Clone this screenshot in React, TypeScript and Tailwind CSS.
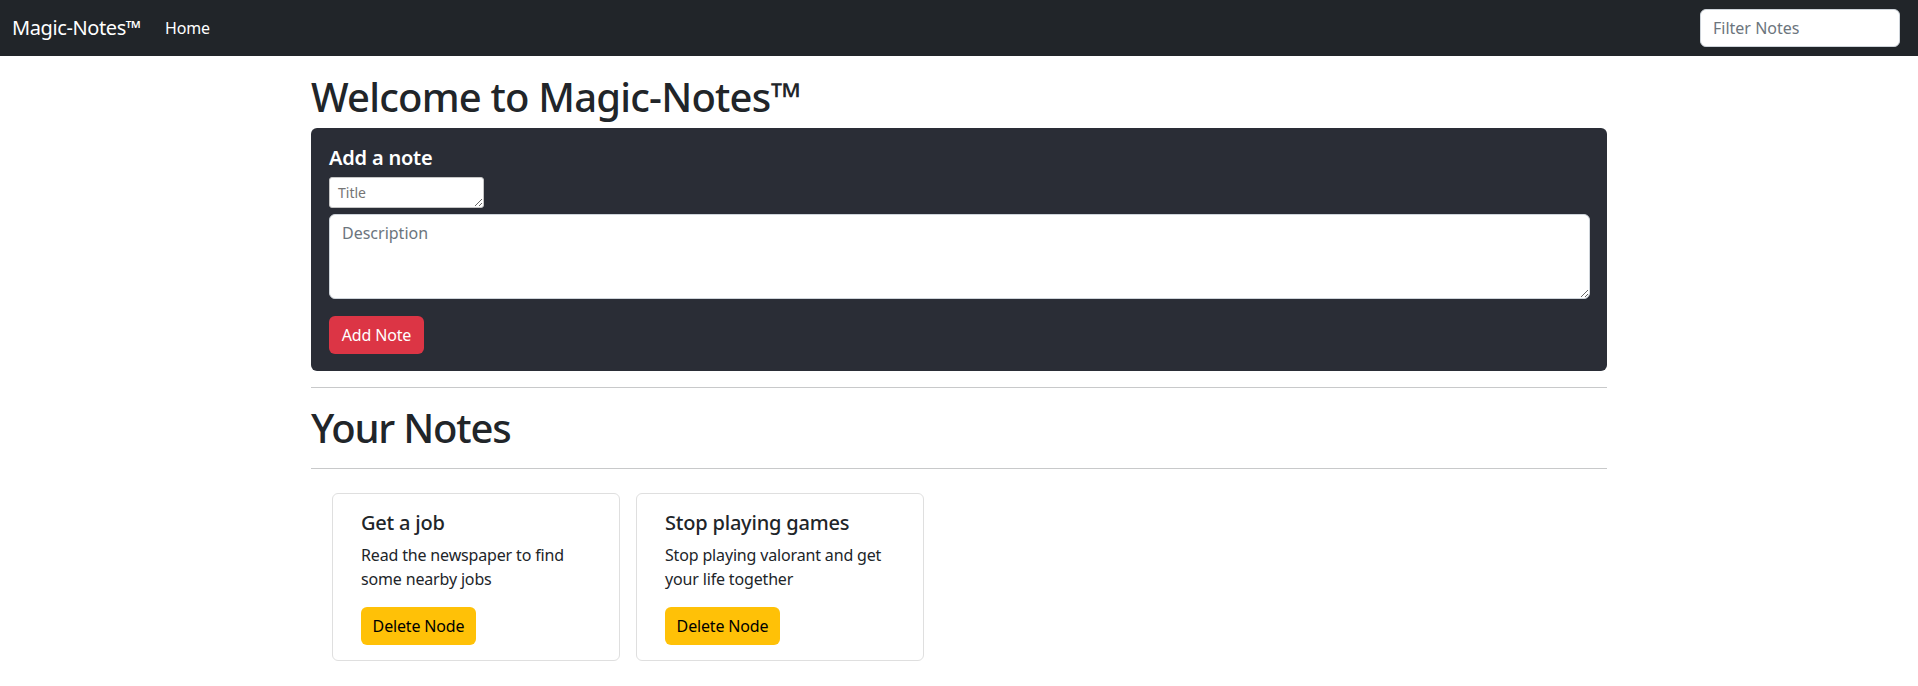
import React from "react";

const notes = [
  {
    title: "Get a job",
    lines: ["Read the newspaper to find", "some nearby jobs"],
  },
  {
    title: "Stop playing games",
    lines: ["Stop playing valorant and get", "your life together"],
  },
];

const NoteCard = ({ title, lines }: { title: string; lines: string[] }) => {
  return (
    <div className="w-[288px] shrink-0 rounded-md border border-[#dfdfdf] pl-[28px] pr-4 pt-[17px] pb-[15px]">
      <h5 className="mb-2 text-[20px] leading-6 font-medium tracking-[-0.01em] text-[#212529]">
        {title}
      </h5>
      <p className="mb-4 text-base leading-6 tracking-[-0.01em] whitespace-nowrap text-[#212529]">
        {lines[0]}
        <br />
        {lines[1]}
      </p>
      <button className="h-[38px] w-[115px] rounded-md bg-[#ffc107] text-base tracking-[-0.01em] text-black">
        Delete Node
      </button>
    </div>
  );
};

const App = () => {
  return (
    <div className="min-h-screen bg-white font-['Noto_Sans',sans-serif] text-[#212529]">
      <nav className="flex h-[56px] items-center justify-between bg-[#212529] pl-3 pr-[18px]">
        <div className="flex items-center">
          <a href="#" className="mr-4 w-[129px] whitespace-nowrap text-[20px] tracking-[-0.02em] text-white">
            Magic-Notes™
          </a>
          <a href="#" className="px-2 text-base tracking-[-0.01em] text-white">
            Home
          </a>
        </div>
        <input
          type="search"
          placeholder="Filter Notes"
          className="h-[38px] w-[200px] rounded-md border border-[#ced4da] bg-white px-3 text-base placeholder:text-[#6c757d] outline-none"
        />
      </nav>

      <div className="mx-auto mt-4 w-[1296px]">
        <h1 className="mb-2 pt-[1px] text-[40px] leading-[47px] font-medium tracking-[-0.02em]">
          Welcome to Magic-Notes™
        </h1>

        <div className="rounded-md bg-[#2a2d36] pl-[18px] pr-[17px] pt-[18px] pb-[17px]">
          <h5 className="mb-[7px] text-[20px] leading-6 font-semibold tracking-[-0.01em] text-white">
            Add a note
          </h5>
          <textarea
            rows={1}
            placeholder="Title"
            className="block h-[31px] w-[155px] rounded-[3px] border border-[#c6c6c6] bg-white px-2 py-[5px] text-[14px] leading-[19px] text-black placeholder:text-[#757575] outline-none"
          />
          <textarea
            placeholder="Description"
            className="mt-[6px] block h-[85px] w-full rounded-md border border-[#ced4da] bg-white px-3 py-[6px] text-base leading-6 placeholder:text-[#6c757d] outline-none"
          />
          <button className="mt-[17px] h-[38px] w-[95px] rounded-md bg-[#dc3545] text-base tracking-[-0.01em] text-white">
            Add Note
          </button>
        </div>

        <hr className="my-4 border-t border-[#c8c9ca]" />

        <h1 className="mb-2 text-[40px] leading-[48px] font-medium tracking-[-0.03em]">Your Notes</h1>

        <hr className="mt-4 border-t border-[#c8c9ca]" />

        <div className="mt-6 ml-[21px] flex gap-4">
          {notes.map((n) => (
            <NoteCard key={n.title} title={n.title} lines={n.lines} />
          ))}
        </div>
      </div>
    </div>
  );
};

export default App;
